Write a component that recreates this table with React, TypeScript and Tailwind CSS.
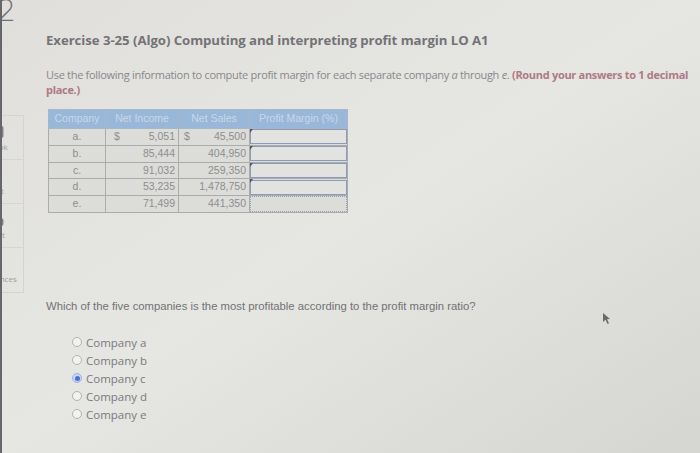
import { BookOpen, Printer, Lightbulb, Library } from 'lucide-react';

const rows = [
  { co: 'a.', income: '5,051', sales: '45,500', dollar: true },
  { co: 'b.', income: '85,444', sales: '404,950' },
  { co: 'c.', income: '91,032', sales: '259,350' },
  { co: 'd.', income: '53,235', sales: '1,478,750' },
  { co: 'e.', income: '71,499', sales: '441,350', last: true },
];

const options = ['Company a', 'Company b', 'Company c', 'Company d', 'Company e'];

const sideItems = [
  { Icon: BookOpen, label: 'eBook' },
  { Icon: Lightbulb, label: 'Hint' },
  { Icon: Printer, label: 'Print' },
  { Icon: Library, label: 'References' },
];

function Sidebar() {
  return (
    <div className="w-[22px] shrink-0 flex flex-col overflow-hidden">
      <div className="h-[115px] relative">
        <span className="absolute -left-[5px] -top-[4px] text-[30px] leading-none text-[#717175] font-['DejaVu_Sans',sans-serif] font-light">
          2
        </span>
      </div>
      <div className="flex flex-col border-t border-r border-b border-[#d3d3cf]">
        {sideItems.map((s, i) => (
          <div
            key={i}
            className={`h-[44px] w-[56px] -ml-[34px] flex flex-col items-center justify-center gap-[2px] overflow-hidden ${
              i < 3 ? 'border-b border-[#d5d5d1]' : ''
            }`}
          >
            <s.Icon size={16} strokeWidth={2.4} className="text-[#808084]" />
            <span className="text-[8px] leading-none text-[#9c9c9e] whitespace-nowrap">{s.label}</span>
          </div>
        ))}
      </div>
    </div>
  );
}

function MarginTable() {
  return (
    <table className="border-collapse text-[10.5px] text-[#8e8e90] font-['Liberation_Sans',sans-serif]">
      <thead>
        <tr className="h-[19px] bg-[#99b7d9] text-[#c8d7e9]">
          <th className="w-[57px] border border-[#a9b6c6] font-normal">Company</th>
          <th className="w-[73px] border border-[#a9b6c6] font-normal">Net Income</th>
          <th className="w-[71px] border border-[#a9b6c6] font-normal">Net Sales</th>
          <th className="w-[98px] border border-[#a9b6c6] font-normal">Profit Margin (%)</th>
        </tr>
      </thead>
      <tbody>
        {rows.map((r) => (
          <tr key={r.co} className={r.last ? 'h-[17px]' : 'h-[16px]'}>
            <td className="border border-[#a9abae] bg-[#dcdcd9] text-center">{r.co}</td>
            <td className="border border-[#a9abae] bg-[#dcdcd9] px-[3px]">
              <div className="flex justify-between">
                <span className="pl-[5px]">{r.dollar ? '$' : ''}</span>
                <span>{r.income}</span>
              </div>
            </td>
            <td className="border border-[#a9abae] bg-[#dcdcd9] px-[3px]">
              <div className="flex justify-between">
                <span className="pl-[2px]">{r.dollar ? '$' : ''}</span>
                <span>{r.sales}</span>
              </div>
            </td>
            <td className="border border-[#a9abae] bg-[#dcdcd9] p-0 relative">
              {r.last ? (
                <div className="h-[16px] border border-dotted border-[#9aa2ae]" />
              ) : (
                <>
                  <div className="h-[15px] border-[1.5px] border-[#8d9bb4] bg-[#e2e2e0]" />
                  <span className="absolute left-0 top-0 w-0 h-0 border-t-[4px] border-r-[3px] border-t-[#55575c] border-r-transparent" />
                </>
              )}
            </td>
          </tr>
        ))}
      </tbody>
    </table>
  );
}

function Cursor() {
  return (
    <svg width="9" height="13" viewBox="0 0 9 13" className="absolute left-[602px] top-[312px]">
      <path d="M1 1 L1 10 L3.5 7.8 L5.5 12 L7 11.3 L5 7.2 L8 7 Z" fill="#55575b" opacity="0.85" />
    </svg>
  );
}

export default function App() {
  return (
    <div className="relative w-[700px] h-[453px] flex overflow-hidden bg-gradient-to-br from-[#e0dfdb] via-[#e6e6e2] to-[#d5d5d1] font-['Open_Sans',sans-serif]">
      <div className="w-[2px] shrink-0 bg-[#66676b]" />
      <Sidebar />
      <div className="flex-1 pl-[22px] pt-[30px]">
        <h1 className="text-[13.2px] font-bold text-[#737377] tracking-[-0.05px] leading-[20px]">
          Exercise 3-25 (Algo) Computing and interpreting profit margin LO A1
        </h1>
        <p className="mt-[17px] text-[11px] leading-[15px] text-[#88888c] tracking-[-0.3px]">
          Use the following information to compute profit margin for each separate company <i>a</i> through{' '}
          <i>e</i>. <b className="text-[#ae7a85]">(Round your answers to 1 decimal place.)</b>
        </p>
        <div className="mt-[12px] ml-[2px]">
          <MarginTable />
        </div>
        <p className="mt-[85px] text-[11.3px] text-[#727276] font-['Liberation_Sans',sans-serif]">
          Which of the five companies is the most profitable according to the profit margin ratio?
        </p>
        <div className="mt-[20px] ml-[26px] flex flex-col gap-[3px]">
          {options.map((o, i) => (
            <label key={o} className="h-[15px] flex items-center gap-[4px] text-[11.5px] text-[#7a7a7e]">
              <span
                className={`w-[10px] h-[10px] rounded-full border flex items-center justify-center ${
                  i === 2 ? 'border-[#9db3e6] bg-[#c9d6f2]' : 'border-[#b2b2b4] bg-[#f2f2f0]'
                }`}
              >
                {i === 2 && <span className="w-[5px] h-[5px] rounded-full bg-[#4c6fd3]" />}
              </span>
              {o}
            </label>
          ))}
        </div>
      </div>
      <Cursor />
    </div>
  );
}
